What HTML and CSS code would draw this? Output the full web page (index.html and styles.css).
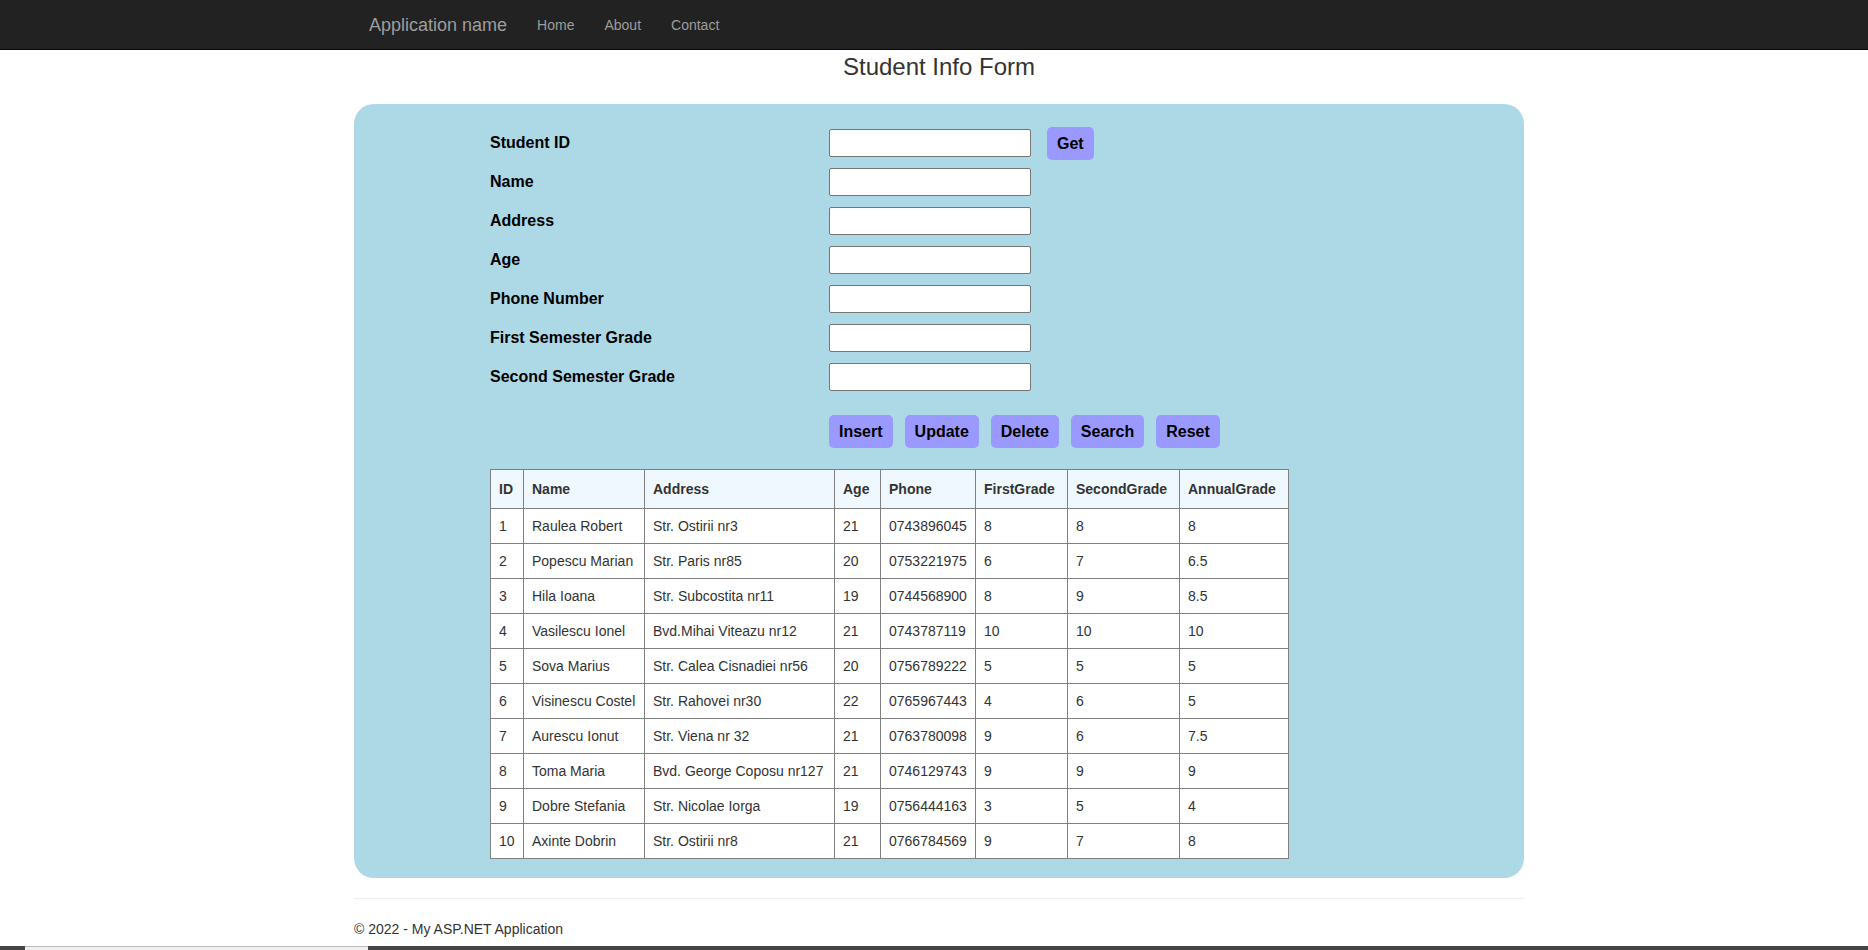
FILE: index.html
```html
<!DOCTYPE html>
<html lang="en">
<head>
<meta charset="utf-8">
<title>Student Info Form</title>
<link rel="stylesheet" href="styles.css">
</head>
<body>
<header class="navbar">
  <div class="container nav-inner">
    <a class="brand" href="#">Application name</a>
    <nav class="nav-links">
      <a href="#">Home</a>
      <a href="#">About</a>
      <a href="#">Contact</a>
    </nav>
  </div>
</header>

<main class="container">
  <h2 class="page-title">Student Info Form</h2>

  <section class="panel">
    <div class="form-grid">
      <label class="field-label">Student ID</label>
      <input class="field-input" type="text">
      <button class="btn btn-get" type="button">Get</button>

      <label class="field-label">Name</label>
      <input class="field-input" type="text">
      <span></span>

      <label class="field-label">Address</label>
      <input class="field-input" type="text">
      <span></span>

      <label class="field-label">Age</label>
      <input class="field-input" type="text">
      <span></span>

      <label class="field-label">Phone Number</label>
      <input class="field-input" type="text">
      <span></span>

      <label class="field-label">First Semester Grade</label>
      <input class="field-input" type="text">
      <span></span>

      <label class="field-label">Second Semester Grade</label>
      <input class="field-input" type="text">
      <span></span>
    </div>

    <div class="actions">
      <button class="btn" type="button">Insert</button>
      <button class="btn" type="button">Update</button>
      <button class="btn" type="button">Delete</button>
      <button class="btn" type="button">Search</button>
      <button class="btn" type="button">Reset</button>
    </div>

    <table class="grid">
      <colgroup>
        <col class="c-id"><col class="c-name"><col class="c-addr"><col class="c-age">
        <col class="c-phone"><col class="c-first"><col class="c-second"><col class="c-annual">
      </colgroup>
      <thead>
        <tr><th>ID</th><th>Name</th><th>Address</th><th>Age</th><th>Phone</th><th>FirstGrade</th><th>SecondGrade</th><th>AnnualGrade</th></tr>
      </thead>
      <tbody>
        <tr><td>1</td><td>Raulea Robert</td><td>Str. Ostirii nr3</td><td>21</td><td>0743896045</td><td>8</td><td>8</td><td>8</td></tr>
        <tr><td>2</td><td>Popescu Marian</td><td>Str. Paris nr85</td><td>20</td><td>0753221975</td><td>6</td><td>7</td><td>6.5</td></tr>
        <tr><td>3</td><td>Hila Ioana</td><td>Str. Subcostita nr11</td><td>19</td><td>0744568900</td><td>8</td><td>9</td><td>8.5</td></tr>
        <tr><td>4</td><td>Vasilescu Ionel</td><td>Bvd.Mihai Viteazu nr12</td><td>21</td><td>0743787119</td><td>10</td><td>10</td><td>10</td></tr>
        <tr><td>5</td><td>Sova Marius</td><td>Str. Calea Cisnadiei nr56</td><td>20</td><td>0756789222</td><td>5</td><td>5</td><td>5</td></tr>
        <tr><td>6</td><td>Visinescu Costel</td><td>Str. Rahovei nr30</td><td>22</td><td>0765967443</td><td>4</td><td>6</td><td>5</td></tr>
        <tr><td>7</td><td>Aurescu Ionut</td><td>Str. Viena nr 32</td><td>21</td><td>0763780098</td><td>9</td><td>6</td><td>7.5</td></tr>
        <tr><td>8</td><td>Toma Maria</td><td>Bvd. George Coposu nr127</td><td>21</td><td>0746129743</td><td>9</td><td>9</td><td>9</td></tr>
        <tr><td>9</td><td>Dobre Stefania</td><td>Str. Nicolae Iorga</td><td>19</td><td>0756444163</td><td>3</td><td>5</td><td>4</td></tr>
        <tr><td>10</td><td>Axinte Dobrin</td><td>Str. Ostirii nr8</td><td>21</td><td>0766784569</td><td>9</td><td>7</td><td>8</td></tr>
      </tbody>
    </table>
  </section>

  <hr class="footer-rule">
  <footer class="footer">
    <p>&copy; 2022 - My ASP.NET Application</p>
  </footer>
</main>

<div class="bottom-strip">
  <span class="strip-dark strip-start"></span>
  <span class="strip-light"></span>
  <span class="strip-dark strip-rest"></span>
</div>
</body>
</html>
```

FILE: styles.css
```css
html, body {
  margin: 0;
  padding: 0;
}

body {
  font-family: "Liberation Sans", Arial, Helvetica, sans-serif;
  font-size: 14px;
  line-height: 20px;
  color: #333;
  background: #fff;
  overflow: hidden;
}

.container {
  width: 1170px;
  margin: 0 auto;
  padding-left: 10px;
  box-sizing: content-box;
}

/* Navbar */
.navbar {
  height: 50px;
  box-sizing: border-box;
  background: #222;
  border-bottom: 1px solid #080808;
}

.nav-inner {
  display: flex;
  align-items: center;
  height: 49px;
}

.brand {
  padding: 15px;
  font-size: 18px;
  line-height: 20px;
  color: #9d9d9d;
  text-decoration: none;
}

.nav-links {
  display: flex;
}

.nav-links a {
  padding: 15px;
  font-size: 14px;
  line-height: 20px;
  color: #9d9d9d;
  text-decoration: none;
}

/* Title */
.page-title {
  margin: 4px 0 0;
  font-size: 24px;
  line-height: 26px;
  font-weight: normal;
  color: #333;
  text-align: center;
}

/* Panel */
.panel {
  margin-top: 24px;
  background: #add8e6;
  border-radius: 20px;
  padding: 25px 0 19px 136px;
}

.form-grid {
  display: grid;
  grid-template-columns: 323px 202px auto;
  column-gap: 16px;
  row-gap: 11px;
  align-items: center;
}

.field-label {
  font-size: 16px;
  font-weight: bold;
  line-height: 20px;
  color: #000;
}

.field-input {
  width: 202px;
  height: 28px;
  box-sizing: border-box;
  margin: 0;
  border: 1px solid #767676;
  border-radius: 2px;
  background: #fff;
  font-family: inherit;
  font-size: 14px;
}

.btn {
  height: 33px;
  box-sizing: border-box;
  margin: 0;
  padding: 0 10px;
  border: none;
  border-radius: 5px;
  background: #9999ff;
  color: #000;
  font-family: "Liberation Sans", Arial, sans-serif;
  font-size: 16px;
  font-weight: bold;
  line-height: 33px;
}

.btn-get {
  justify-self: start;
  margin: -2.5px 0;
}

.actions {
  display: flex;
  gap: 12px;
  margin-top: 24px;
  padding-left: 339px;
}

/* Table */
.grid {
  margin-top: 21px;
  width: 798px;
  table-layout: fixed;
  border-collapse: collapse;
  background: #fff;
  font-size: 14px;
  color: #333;
}

.grid th,
.grid td {
  border: 1px solid #808080;
  padding: 7px 8px;
  line-height: 20px;
  text-align: left;
  white-space: nowrap;
  overflow: hidden;
}

.grid th {
  padding-top: 9px;
  padding-bottom: 9px;
  background: #f0f8ff;
  font-weight: bold;
}

.c-id { width: 33px; }
.c-name { width: 121px; }
.c-addr { width: 190px; }
.c-age { width: 46px; }
.c-phone { width: 95px; }
.c-first { width: 92px; }
.c-second { width: 112px; }
.c-annual { width: 109px; }

/* Footer */
.footer-rule {
  margin: 20px 0 0;
  border: 0;
  border-top: 1px solid #eee;
}

.footer p {
  margin: 20px 0 0;
  font-size: 14px;
  line-height: 20px;
  color: #333;
}

/* Bottom strip */
.bottom-strip {
  position: fixed;
  left: 0;
  right: 0;
  bottom: 0;
  height: 4px;
  display: flex;
}

.strip-dark {
  background: #444;
}

.strip-start {
  width: 25px;
}

.strip-light {
  width: 343px;
  box-sizing: border-box;
  background: #f0f0f0;
  border-top: 1px solid #bbb;
}

.strip-rest {
  flex: 1;
}
```
